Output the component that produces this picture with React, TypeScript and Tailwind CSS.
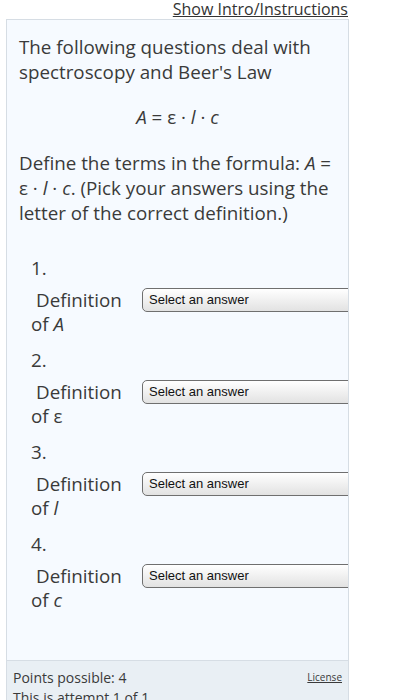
import React from 'react';

const items = [
  { n: '1.', sym: 'A', italic: true },
  { n: '2.', sym: 'ε', italic: false },
  { n: '3.', sym: 'l', italic: true },
  { n: '4.', sym: 'c', italic: true },
];

function AnswerSelect() {
  return (
    <div className="h-[24px] w-[260px] shrink-0 rounded-[5px] border border-[#6f6f6f] bg-gradient-to-b from-white to-[#e2e2e2] pl-[6px] text-[13px] leading-[22px] text-[#111] font-['Liberation_Sans',Arial,sans-serif]">
      Select an answer
    </div>
  );
}

export default function App() {
  return (
    <div className="w-[410px] h-[700px] overflow-hidden bg-white font-['Open_Sans',sans-serif] text-[#3a3a3a]">
      <div className="flex justify-end w-[348px] h-[20px] text-[16px] leading-[20px] -mt-[1px]">
        <a className="underline text-[#333]">Show Intro/Instructions</a>
      </div>

      <div className="ml-[6px] w-[343px] border border-[#d6dde4] bg-[#f6faff] overflow-hidden">
        <div className="px-[12px] pt-[15px] text-[18.8px] leading-[25px]">
          <p>The following questions deal with spectroscopy and Beer's Law</p>
          <p className="mt-[20px] text-center">
            <i>A</i> = ε · <i>l</i> · <i>c</i>
          </p>
          <p className="mt-[21px]">
            Define the terms in the formula: <i>A</i> = ε · <i>l</i> · <i>c</i>. (Pick your answers using the letter of the correct definition.)
          </p>

          <div className="mt-[30px] flex flex-col gap-[10px] pl-[12px] pb-[46px]">
            {items.map((it) => (
              <div key={it.n}>
                <div className="h-[25px]">{it.n}</div>
                <div className="flex items-end h-[31px]">
                  <span className="w-[111px] shrink-0 pl-[5px] leading-[24px]">Definition</span>
                  <AnswerSelect />
                </div>
                <div className="h-[26px]">
                  of {it.italic ? <i>{it.sym}</i> : it.sym}
                </div>
              </div>
            ))}
          </div>
        </div>

        <div className="border-t border-[#d6dde4] bg-[#e9eff4] px-[6px] pt-[7px] pb-[8px] flex justify-between">
          <div className="text-[14px] leading-[20px]">
            <div>Points possible: 4</div>
            <div>This is attempt 1 of 1.</div>
          </div>
          <a className="text-[10px] leading-[14px] underline pt-[2px]">License</a>
        </div>
      </div>
    </div>
  );
}
